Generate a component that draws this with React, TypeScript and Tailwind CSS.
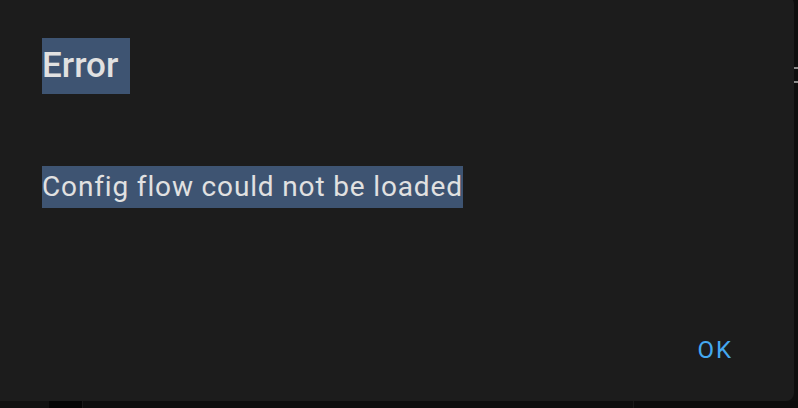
export default function App() {
  return (
    <div
      className="relative h-[408px] w-[798px] overflow-hidden bg-[#0e0e0e]"
      style={{ fontFamily: "Roboto, 'Noto Sans', sans-serif" }}
    >
      {/* backdrop bits peeking out below the dialog */}
      <div className="absolute bottom-0 left-0 flex h-[7px] w-full">
        <div className="w-[49px] bg-[#111111]" />
        <div className="w-[33px] bg-[#050505]" />
        <div className="w-px bg-[#1a1a1a]" />
        <div className="w-[550px] bg-[#0e0e0e]" />
        <div className="w-px bg-[#1a1a1a]" />
        <div className="flex-1 bg-[#0c0c0c]" />
      </div>
      <div className="absolute right-0 top-[67px] h-[2px] w-[4px] bg-[#8a8a8a]" />
      <div className="absolute right-0 top-[81px] h-[2px] w-[4px] bg-[#8a8a8a]" />

      <div className="absolute left-[-10px] top-[-4px] flex h-[405px] w-[804px] flex-col rounded-lg bg-[#1c1c1c] pl-[52px] pr-[53px]">
        <h2 className="mt-[42px] text-[35px] font-medium leading-[56px] text-[#e1e1e1]">
          <span className="inline-block bg-[#3e5472] pr-[12px]">Error</span>
        </h2>
        <p className="mt-[72px] text-[28px] leading-[42px] tracking-[0.85px] text-[#e1e1e1]">
          <span className="inline-block bg-[#3e5472]">Config flow could not be loaded</span>
        </p>
        <div className="mt-auto mb-[27px] flex justify-end">
          <button className="rounded px-[8px] py-[10px] text-[24px] font-normal uppercase leading-[28px] tracking-[2px] text-[#44a8f0]">
            OK
          </button>
        </div>
      </div>
    </div>
  );
}
